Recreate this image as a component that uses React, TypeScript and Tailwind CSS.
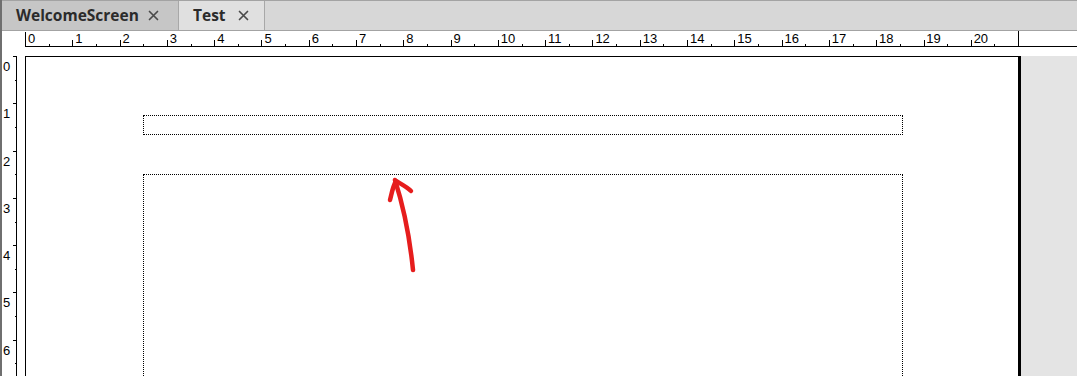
import React from 'react';

const UNIT = 47.29;
const UNITS = Array.from({ length: 21 }, (_, i) => i);
const V_UNITS = Array.from({ length: 7 }, (_, i) => i);

function CloseIcon() {
  return (
    <svg width="11" height="11" viewBox="0 0 11 11" className="shrink-0">
      <path d="M1.5 1.5 L9.5 9.5 M9.5 1.5 L1.5 9.5" stroke="#4a4a4a" strokeWidth="1.7" strokeLinecap="round" />
    </svg>
  );
}

function TabBar() {
  return (
    <div className="flex h-[31px] shrink-0 border-t border-b border-[#a3a3a3] bg-[#d7d7d7] font-['Open_Sans',sans-serif] text-[15.5px] font-bold text-[#2b2b2b]">
      {/* active document tab */}
      <div className="flex w-[176px] items-center gap-[9px] bg-[#c6c6c6] pl-[14px]">
        <span className="leading-none">WelcomeScreen</span>
        <CloseIcon />
      </div>
      <div className="flex w-[87px] items-center gap-[12px] border-x border-[#a8a8a8] bg-[#e0e0e0] pl-[14px]">
        <span className="leading-none">Test</span>
        <CloseIcon />
      </div>
    </div>
  );
}

function HRuler() {
  const w = Math.round(UNIT * 21);
  return (
    <div className="flex h-[16px] shrink-0">
      <div className="w-[23px] shrink-0" />
      <div className="relative w-[993px] shrink-0 border-b border-black">
        <svg width={w} height="15" className="absolute left-0 top-0">
          {UNITS.map((i) => {
            const x = Math.round(i * UNIT) + 0.5;
            const m = Math.round((i + 0.5) * UNIT) + 0.5;
            return (
              <g key={i} stroke="#000" strokeWidth="1">
                <line x1={x} x2={x} y1={i === 0 ? 1 : 9} y2="15" />
                <line x1={m} x2={m} y1="13" y2="15" />
              </g>
            );
          })}
        </svg>
        <div className="flex font-['Liberation_Sans',Arial,sans-serif] text-[13px] leading-[14px] text-black">
          {UNITS.map((i) => (
            <div key={i} className="w-[47.29px] shrink-0 pl-[3px] pt-[1px]">
              {i}
            </div>
          ))}
        </div>
      </div>
      <div className="flex-1 border-b border-l border-black" />
    </div>
  );
}

function VRuler() {
  return (
    <div className="relative w-[23px] shrink-0">
      <svg width="23" height="330" className="absolute left-0 top-0">
        <line x1="14.5" x2="14.5" y1="0" y2="330" stroke="#000" />
        {V_UNITS.map((i) => {
          const y = Math.round(i * UNIT) + 0.5;
          const m = Math.round((i + 0.5) * UNIT) + 0.5;
          return (
            <g key={i} stroke="#000">
              <line x1="11" x2="15" y1={y} y2={y} />
              <line x1="13" x2="15" y1={m} y2={m} />
            </g>
          );
        })}
      </svg>
      <div className="flex flex-col font-['Liberation_Sans',Arial,sans-serif] text-[13px] leading-[14px] text-black">
        {V_UNITS.map((i) => (
          <div key={i} className="h-[47.29px] shrink-0 pl-[1px] pt-[4px]">
            {i}
          </div>
        ))}
      </div>
    </div>
  );
}

export default function App() {
  return (
    <div className="relative flex h-[376px] w-[1077px] overflow-hidden bg-white">
      <div className="w-[2px] shrink-0 bg-[#6f6f6f]" />
      <div className="flex min-w-0 flex-1 flex-col">
        <TabBar />
        <HRuler />
        <div className="h-[9px] shrink-0" />
        <div className="flex min-h-0 flex-1">
          <VRuler />
          {/* page */}
          <div className="w-[993px] shrink-0 overflow-hidden border-l border-t border-black pl-[117px] pt-[58px]">
            <div className="h-[20px] w-[760px] border border-dotted border-black" />
            <div className="mt-[39px] h-[400px] w-[760px] border border-dotted border-black" />
          </div>
          <div className="w-[3px] shrink-0 bg-black" />
          <div className="flex-1 bg-[#e4e4e4]" />
        </div>
      </div>

      {/* hand-drawn annotation arrow */}
      <svg width="1077" height="376" className="pointer-events-none absolute left-0 top-0">
        <g fill="none" stroke="#e61d1d" strokeWidth="4.5" strokeLinecap="round" strokeLinejoin="round">
          <path d="M413 270 C410 240 403 205 395 180" />
          <path d="M390 200 C392 192 393 186 396 181 C401 184 407 187 411 191" />
        </g>
      </svg>
    </div>
  );
}
